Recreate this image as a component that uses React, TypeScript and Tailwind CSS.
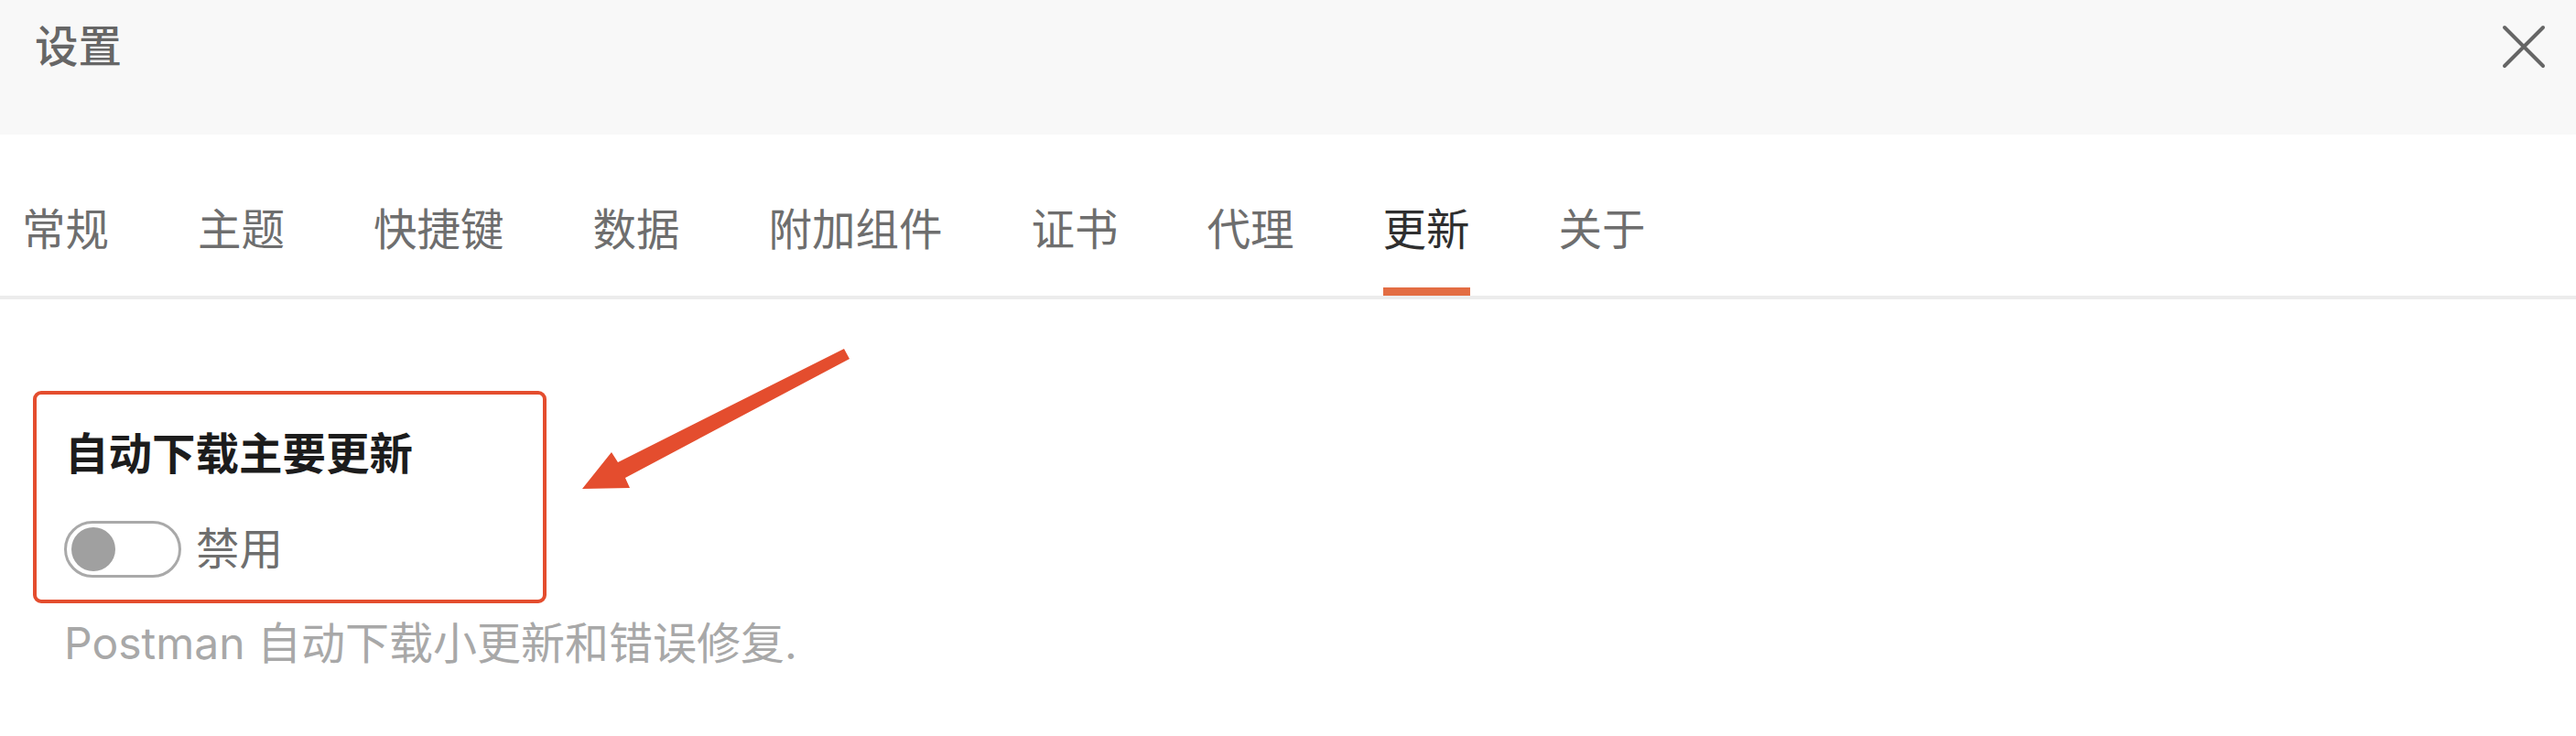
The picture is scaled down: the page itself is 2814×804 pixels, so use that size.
import React from "react";

const tabs = ["常规", "主题", "快捷键", "数据", "附加组件", "证书", "代理", "更新", "关于"];

export default function App() {
  return (
    <div
      className="relative w-[2814px] h-[804px] overflow-hidden bg-white"
      style={{ fontFamily: 'Inter, "Noto Sans CJK SC", sans-serif' }}
    >
      {/* Header */}
      <div className="h-[147px] bg-[#f8f8f8] pl-[38px] pr-[33px]">
        <div className="h-[102px] flex items-center justify-between">
          <div className="text-[47.5px] leading-none font-medium text-[#666666]">设置</div>
          <svg width="48" height="48" viewBox="0 0 48 48" className="block">
            <path d="M3 3 L45 45 M45 3 L3 45" stroke="#666666" strokeWidth="4" strokeLinecap="round" fill="none" />
          </svg>
        </div>
      </div>

      {/* Tabs */}
      <div className="flex gap-[97px] pl-[24px] border-b-4 border-[#ececec]">
        {tabs.map((t) => {
          const active = t === "更新";
          return (
            <div
              key={t}
              className={
                active
                  ? "pt-[80px] pb-[39.5px] border-b-[9px] border-[#e36d43] text-[47.5px] leading-none text-[#2f2f2f]"
                  : "pt-[80px] pb-[39.5px] border-b-[9px] border-transparent text-[47.5px] leading-none text-[#6e6e6e]"
              }
            >
              {t}
            </div>
          );
        })}
      </div>

      {/* Content */}
      <div className="pl-[36px] pt-[100px]">
        <div className="w-[561px] h-[232px] border-4 border-[#e44d2e] rounded-[9px] pl-[31px] pt-[41px]">
          <div className="text-[47.5px] leading-none font-bold text-[#1c1c1c]">自动下载主要更新</div>
          <div className="mt-[49px] flex items-center">
            <div className="-ml-[1px] w-[128px] h-[62px] rounded-full border-[3px] border-[#a9a9a9] flex items-center pl-[5px]">
              <div className="w-[48px] h-[48px] rounded-full bg-[#a0a0a0]" />
            </div>
            <div className="ml-[16px] text-[47.5px] leading-none text-[#6e6e6e]">禁用</div>
          </div>
        </div>
        <div className="mt-[20px] ml-[34px] text-[48px] leading-none text-[#a8a8a8]">
          Postman 自动下载小更新和错误修复.
        </div>
      </div>

      {/* Annotation arrow */}
      <svg
        className="absolute left-[600px] top-[360px]"
        width="360"
        height="200"
        viewBox="0 0 360 200"
      >
        <polygon
          points="36,174 68,134 75,145 322,21 328,32 83,162 88,173"
          fill="#e44d2e"
          strokeLinejoin="round"
        />
      </svg>
    </div>
  );
}
